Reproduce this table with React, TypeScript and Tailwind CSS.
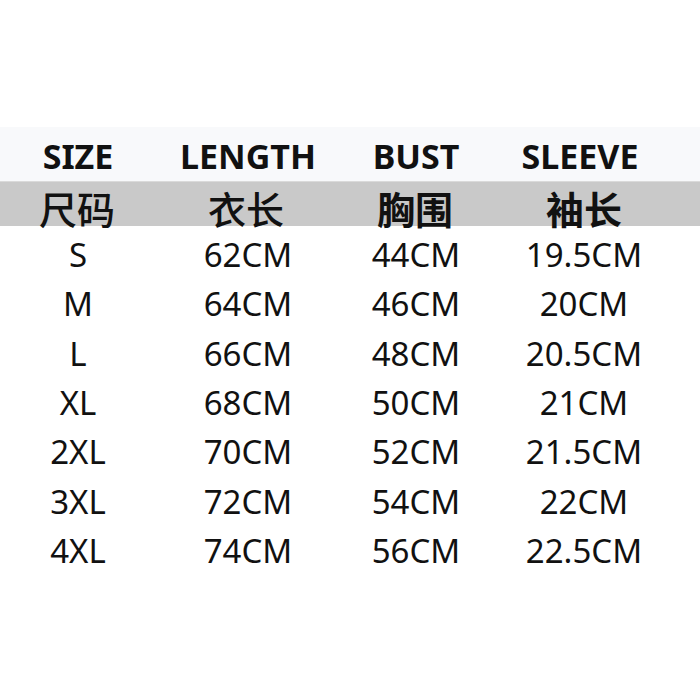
const ROWS = [
  ['S', '62CM', '44CM', '19.5CM'],
  ['M', '64CM', '46CM', '20CM'],
  ['L', '66CM', '48CM', '20.5CM'],
  ['XL', '68CM', '50CM', '21CM'],
  ['2XL', '70CM', '52CM', '21.5CM'],
  ['3XL', '72CM', '54CM', '22CM'],
  ['4XL', '74CM', '56CM', '22.5CM'],
]

// column widths chosen so the cell centres sit at 78 / 248 / 416 / 584
const COLS = ['w-[156px]', 'w-[184px]', 'w-[152px]', 'w-[184px]']

const Cell = ({ i, children, className = '' }: { i: number; children: React.ReactNode; className?: string }) => (
  <div className={`${COLS[i]} shrink-0 text-center ${className}`}>{children}</div>
)

export default function App() {
  return (
    <div
      className="w-[700px] h-[700px] bg-white text-[#111] overflow-hidden"
      style={{ fontFamily: '"Noto Sans", "Noto Sans CJK SC", sans-serif' }}
    >
      <div className="h-[127px]" />

      <div className="h-[54px] bg-[#f8f9fb] flex items-center pt-[3px] text-[34px] font-bold leading-none">
        {['SIZE', 'LENGTH', 'BUST', 'SLEEVE'].map((h, i) => (
          <Cell key={h} i={i} className={i === 3 ? '-translate-x-[4px]' : ''}>{h}</Cell>
        ))}
      </div>

      <div
        className="h-[45px] bg-[#c9c9c9] border-t border-[#dadada] flex items-end text-[38px] leading-none"
        style={{ fontFamily: '"Noto Sans CJK SC", sans-serif' }}
      >
        <Cell i={0} className="font-medium -translate-x-[1px] translate-y-[1px]">尺码</Cell>
        <Cell i={1} className="font-medium -translate-x-[2px] translate-y-[1px]">衣长</Cell>
        <Cell i={2} className="font-bold -translate-x-[1px] translate-y-[1px]">胸围</Cell>
        <Cell i={3} className="font-bold translate-y-[1px]">袖长</Cell>
      </div>

      <div className="pt-[4px]">
        {ROWS.map(r => (
          <div key={r[0]} className="h-[49.3px] flex items-center text-[33px] leading-none">
            {r.map((v, i) => (
              <Cell key={i} i={i}>{v}</Cell>
            ))}
          </div>
        ))}
      </div>
    </div>
  )
}
